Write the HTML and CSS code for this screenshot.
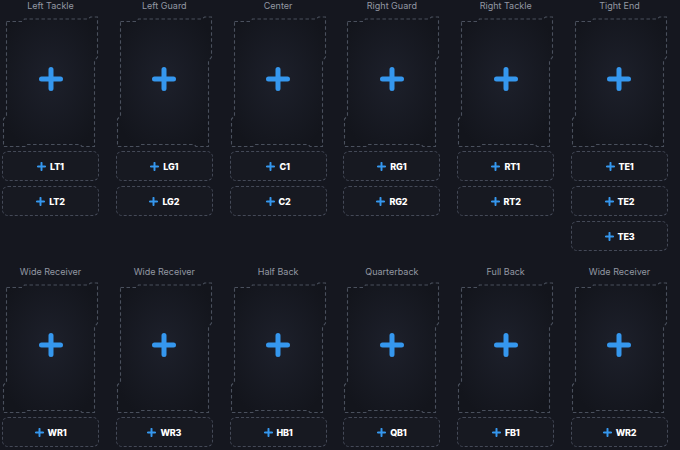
FILE: index.html
```html
<!DOCTYPE html>
<html>
<head>
<meta charset="utf-8">
<link rel="stylesheet" href="styles.css">
</head>
<body>
<svg class="defs" width="0" height="0" aria-hidden="true">
  <defs>
    <radialGradient id="glow" cx="50%" cy="48%" r="60%">
      <stop offset="0%" stop-color="#1d202b"/>
      <stop offset="100%" stop-color="#13151c"/>
    </radialGradient>
  </defs>
</svg>
<main class="board">
  <section class="group">
    <div class="col">
      <div class="label">Left Tackle</div>
      <div class="card"><svg class="frame" viewBox="0 0 97 132"><path d="M4.5 5.5H20L22.5 3H86L88.5 1H95.5V41L92.5 45V130.5H80L78 128.5H25L23 130.5H1.5V103L4.5 100Z"/></svg><svg class="plus" viewBox="0 0 24 24"><path d="M12 2.5V21.5M2.5 12H21.5"/></svg></div>
      <div class="slots">
        <div class="slot"><svg class="sp" viewBox="0 0 10 10"><path d="M5 1V9M1 5H9"/></svg><span>LT1</span></div>
        <div class="slot"><svg class="sp" viewBox="0 0 10 10"><path d="M5 1V9M1 5H9"/></svg><span>LT2</span></div>
      </div>
    </div>
    <div class="col">
      <div class="label">Left Guard</div>
      <div class="card"><svg class="frame" viewBox="0 0 97 132"><path d="M4.5 5.5H20L22.5 3H86L88.5 1H95.5V41L92.5 45V130.5H80L78 128.5H25L23 130.5H1.5V103L4.5 100Z"/></svg><svg class="plus" viewBox="0 0 24 24"><path d="M12 2.5V21.5M2.5 12H21.5"/></svg></div>
      <div class="slots">
        <div class="slot"><svg class="sp" viewBox="0 0 10 10"><path d="M5 1V9M1 5H9"/></svg><span>LG1</span></div>
        <div class="slot"><svg class="sp" viewBox="0 0 10 10"><path d="M5 1V9M1 5H9"/></svg><span>LG2</span></div>
      </div>
    </div>
    <div class="col">
      <div class="label">Center</div>
      <div class="card"><svg class="frame" viewBox="0 0 97 132"><path d="M4.5 5.5H20L22.5 3H86L88.5 1H95.5V41L92.5 45V130.5H80L78 128.5H25L23 130.5H1.5V103L4.5 100Z"/></svg><svg class="plus" viewBox="0 0 24 24"><path d="M12 2.5V21.5M2.5 12H21.5"/></svg></div>
      <div class="slots">
        <div class="slot"><svg class="sp" viewBox="0 0 10 10"><path d="M5 1V9M1 5H9"/></svg><span>C1</span></div>
        <div class="slot"><svg class="sp" viewBox="0 0 10 10"><path d="M5 1V9M1 5H9"/></svg><span>C2</span></div>
      </div>
    </div>
    <div class="col">
      <div class="label">Right Guard</div>
      <div class="card"><svg class="frame" viewBox="0 0 97 132"><path d="M4.5 5.5H20L22.5 3H86L88.5 1H95.5V41L92.5 45V130.5H80L78 128.5H25L23 130.5H1.5V103L4.5 100Z"/></svg><svg class="plus" viewBox="0 0 24 24"><path d="M12 2.5V21.5M2.5 12H21.5"/></svg></div>
      <div class="slots">
        <div class="slot"><svg class="sp" viewBox="0 0 10 10"><path d="M5 1V9M1 5H9"/></svg><span>RG1</span></div>
        <div class="slot"><svg class="sp" viewBox="0 0 10 10"><path d="M5 1V9M1 5H9"/></svg><span>RG2</span></div>
      </div>
    </div>
    <div class="col">
      <div class="label">Right Tackle</div>
      <div class="card"><svg class="frame" viewBox="0 0 97 132"><path d="M4.5 5.5H20L22.5 3H86L88.5 1H95.5V41L92.5 45V130.5H80L78 128.5H25L23 130.5H1.5V103L4.5 100Z"/></svg><svg class="plus" viewBox="0 0 24 24"><path d="M12 2.5V21.5M2.5 12H21.5"/></svg></div>
      <div class="slots">
        <div class="slot"><svg class="sp" viewBox="0 0 10 10"><path d="M5 1V9M1 5H9"/></svg><span>RT1</span></div>
        <div class="slot"><svg class="sp" viewBox="0 0 10 10"><path d="M5 1V9M1 5H9"/></svg><span>RT2</span></div>
      </div>
    </div>
    <div class="col">
      <div class="label">Tight End</div>
      <div class="card"><svg class="frame" viewBox="0 0 97 132"><path d="M4.5 5.5H20L22.5 3H86L88.5 1H95.5V41L92.5 45V130.5H80L78 128.5H25L23 130.5H1.5V103L4.5 100Z"/></svg><svg class="plus" viewBox="0 0 24 24"><path d="M12 2.5V21.5M2.5 12H21.5"/></svg></div>
      <div class="slots">
        <div class="slot"><svg class="sp" viewBox="0 0 10 10"><path d="M5 1V9M1 5H9"/></svg><span>TE1</span></div>
        <div class="slot"><svg class="sp" viewBox="0 0 10 10"><path d="M5 1V9M1 5H9"/></svg><span>TE2</span></div>
        <div class="slot"><svg class="sp" viewBox="0 0 10 10"><path d="M5 1V9M1 5H9"/></svg><span>TE3</span></div>
      </div>
    </div>
  </section>

  <section class="group">
    <div class="col">
      <div class="label">Wide Receiver</div>
      <div class="card"><svg class="frame" viewBox="0 0 97 132"><path d="M4.5 5.5H20L22.5 3H86L88.5 1H95.5V41L92.5 45V130.5H80L78 128.5H25L23 130.5H1.5V103L4.5 100Z"/></svg><svg class="plus" viewBox="0 0 24 24"><path d="M12 2.5V21.5M2.5 12H21.5"/></svg></div>
      <div class="slots">
        <div class="slot"><svg class="sp" viewBox="0 0 10 10"><path d="M5 1V9M1 5H9"/></svg><span>WR1</span></div>
      </div>
    </div>
    <div class="col">
      <div class="label">Wide Receiver</div>
      <div class="card"><svg class="frame" viewBox="0 0 97 132"><path d="M4.5 5.5H20L22.5 3H86L88.5 1H95.5V41L92.5 45V130.5H80L78 128.5H25L23 130.5H1.5V103L4.5 100Z"/></svg><svg class="plus" viewBox="0 0 24 24"><path d="M12 2.5V21.5M2.5 12H21.5"/></svg></div>
      <div class="slots">
        <div class="slot"><svg class="sp" viewBox="0 0 10 10"><path d="M5 1V9M1 5H9"/></svg><span>WR3</span></div>
      </div>
    </div>
    <div class="col">
      <div class="label">Half Back</div>
      <div class="card"><svg class="frame" viewBox="0 0 97 132"><path d="M4.5 5.5H20L22.5 3H86L88.5 1H95.5V41L92.5 45V130.5H80L78 128.5H25L23 130.5H1.5V103L4.5 100Z"/></svg><svg class="plus" viewBox="0 0 24 24"><path d="M12 2.5V21.5M2.5 12H21.5"/></svg></div>
      <div class="slots">
        <div class="slot"><svg class="sp" viewBox="0 0 10 10"><path d="M5 1V9M1 5H9"/></svg><span>HB1</span></div>
      </div>
    </div>
    <div class="col">
      <div class="label">Quarterback</div>
      <div class="card"><svg class="frame" viewBox="0 0 97 132"><path d="M4.5 5.5H20L22.5 3H86L88.5 1H95.5V41L92.5 45V130.5H80L78 128.5H25L23 130.5H1.5V103L4.5 100Z"/></svg><svg class="plus" viewBox="0 0 24 24"><path d="M12 2.5V21.5M2.5 12H21.5"/></svg></div>
      <div class="slots">
        <div class="slot"><svg class="sp" viewBox="0 0 10 10"><path d="M5 1V9M1 5H9"/></svg><span>QB1</span></div>
      </div>
    </div>
    <div class="col">
      <div class="label">Full Back</div>
      <div class="card"><svg class="frame" viewBox="0 0 97 132"><path d="M4.5 5.5H20L22.5 3H86L88.5 1H95.5V41L92.5 45V130.5H80L78 128.5H25L23 130.5H1.5V103L4.5 100Z"/></svg><svg class="plus" viewBox="0 0 24 24"><path d="M12 2.5V21.5M2.5 12H21.5"/></svg></div>
      <div class="slots">
        <div class="slot"><svg class="sp" viewBox="0 0 10 10"><path d="M5 1V9M1 5H9"/></svg><span>FB1</span></div>
      </div>
    </div>
    <div class="col">
      <div class="label">Wide Receiver</div>
      <div class="card"><svg class="frame" viewBox="0 0 97 132"><path d="M4.5 5.5H20L22.5 3H86L88.5 1H95.5V41L92.5 45V130.5H80L78 128.5H25L23 130.5H1.5V103L4.5 100Z"/></svg><svg class="plus" viewBox="0 0 24 24"><path d="M12 2.5V21.5M2.5 12H21.5"/></svg></div>
      <div class="slots">
        <div class="slot"><svg class="sp" viewBox="0 0 10 10"><path d="M5 1V9M1 5H9"/></svg><span>WR2</span></div>
      </div>
    </div>
  </section>
</main>
</body>
</html>
```

FILE: styles.css
```css
* { box-sizing: border-box; }

html, body {
  margin: 0;
  padding: 0;
  background: #15171f;
  width: 680px;
  height: 450px;
  overflow: hidden;
  font-family: Inter, "Noto Sans", "Liberation Sans", sans-serif;
}

.defs {
  position: absolute;
  width: 0;
  height: 0;
}

.board {
  display: flex;
  flex-direction: column;
  gap: 15px;
  padding: 0 0 0 2px;
}

.group {
  display: grid;
  grid-template-columns: repeat(6, 97px);
  column-gap: 16.8px;
  align-items: start;
}

.col {
  display: flex;
  flex-direction: column;
}

.label {
  height: 12px;
  line-height: 12px;
  font-size: 9px;
  color: #9398a3;
  text-align: center;
  margin-bottom: 4px;
  white-space: nowrap;
}

.card {
  display: grid;
  width: 97px;
  height: 132px;
}

.card > * {
  grid-area: 1 / 1;
}

.frame {
  width: 97px;
  height: 132px;
}

.frame path {
  fill: url(#glow);
  stroke: #4a505d;
  stroke-width: 1.1;
  stroke-dasharray: 3.5 2.5;
}

.plus {
  width: 24px;
  height: 24px;
  align-self: center;
  justify-self: center;
  margin-bottom: 6px;
}

.plus path {
  fill: none;
  stroke: #3597ee;
  stroke-width: 5;
  stroke-linecap: round;
}

.slots {
  display: flex;
  flex-direction: column;
  gap: 5px;
  margin-top: 3px;
}

.slot {
  height: 30px;
  width: 97px;
  border: 1px dashed #444957;
  border-radius: 6px;
  background: #171921;
  display: flex;
  align-items: center;
  justify-content: center;
  gap: 4px;
  color: #ffffff;
  font-size: 9px;
  font-weight: 800;
  letter-spacing: -0.2px;
}

.sp {
  width: 9px;
  height: 9px;
}

.sp path {
  fill: none;
  stroke: #3597ee;
  stroke-width: 2.2;
  stroke-linecap: round;
}
```
